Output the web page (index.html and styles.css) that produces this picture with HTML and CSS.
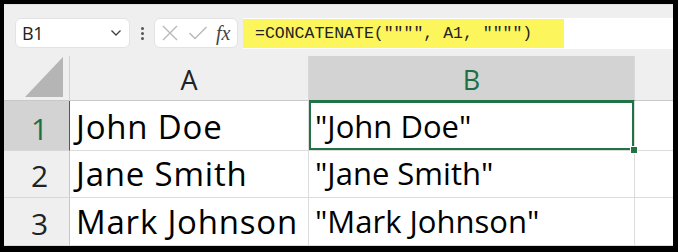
FILE: index.html
```html
<!DOCTYPE html>
<html>
<head>
<meta charset="utf-8">
<link rel="stylesheet" href="styles.css">
</head>
<body>
<div class="frame">
  <div class="toolbar">
    <div class="namebox">
      <span class="ref">B1</span>
      <svg class="chev" width="12" height="8" viewBox="0 0 12 8"><path d="M1.5 1.5 L6 6 L10.5 1.5" fill="none" stroke="#444" stroke-width="1.4"/></svg>
    </div>
    <div class="dots"><i></i><i></i><i></i></div>
    <div class="fxbox">
      <svg width="18" height="18" viewBox="0 0 18 18"><path d="M2 2 L16 16 M16 2 L2 16" stroke="#b8b8b8" stroke-width="1.4" fill="none"/></svg>
      <svg width="20" height="18" viewBox="0 0 20 18"><path d="M1.5 9 L7 14.5 L18.5 3" stroke="#b8b8b8" stroke-width="1.4" fill="none"/></svg>
      <span class="fx">fx</span>
    </div>
    <div class="formula">
      <span class="hl">=CONCATENATE("""", A1, """")</span>
    </div>
  </div>
  <div class="sheet">
    <div class="corner">
      <svg width="40" height="42" viewBox="0 0 40 42"><polygon points="38,1 38,41 0,41" fill="#b5b5b5"/></svg>
    </div>
    <div class="colh">A</div>
    <div class="colh sel">B</div>
    <div class="colh last"></div>

    <div class="rowh sel">1</div>
    <div class="cell">John Doe</div>
    <div class="cell colb active">"John Doe"<span class="handle"></span></div>
    <div class="cell last"></div>

    <div class="rowh">2</div>
    <div class="cell">Jane Smith</div>
    <div class="cell colb">"Jane Smith"</div>
    <div class="cell last"></div>

    <div class="rowh">3</div>
    <div class="cell">Mark Johnson</div>
    <div class="cell colb">"Mark Johnson"</div>
    <div class="cell last"></div>
  </div>
</div>
</body>
</html>
```

FILE: styles.css
```css
html, body {
  margin: 0;
  padding: 0;
  background: #000;
}
body {
  width: 678px;
  height: 252px;
  overflow: hidden;
}
.frame {
  margin: 4px 0 0 4px;
  width: 669px;
  height: 242px;
  background: #f0f0f0;
  display: flex;
  flex-direction: column;
  overflow: hidden;
}
.toolbar {
  height: 52px;
  box-sizing: border-box;
  padding: 13px 0 0 11px;
  display: flex;
  align-items: flex-start;
  background: #efefef;
  border-top: 1px solid #e2e2e2;
}
.namebox {
  width: 115px;
  height: 30px;
  box-sizing: border-box;
  background: #fff;
  border: 1px solid #e3e3e3;
  border-radius: 6px;
  display: flex;
  align-items: center;
  justify-content: space-between;
  padding: 0 7px 0 6px;
}
.ref {
  font-family: "Open Sans", sans-serif;
  font-size: 18px;
  color: #222;
  letter-spacing: -0.3px;
}
.dots {
  width: 24px;
  height: 30px;
  display: flex;
  flex-direction: column;
  align-items: center;
  justify-content: center;
  gap: 2px;
}
.dots i {
  display: block;
  width: 3px;
  height: 3px;
  background: #555;
  border-radius: 50%;
}
.fxbox {
  width: 84px;
  height: 30px;
  box-sizing: border-box;
  background: #fff;
  border: 1px solid #e3e3e3;
  border-radius: 6px;
  display: flex;
  align-items: center;
  padding-left: 6px;
  gap: 9px;
}
.fx {
  font-family: "Liberation Serif", serif;
  font-style: italic;
  font-size: 20px;
  color: #444;
  margin-left: -1px;
}
.formula {
  margin-left: 5px;
  flex: 1;
  height: 31px;
  background: #fff;
  display: flex;
  align-items: center;
}
.hl {
  background: #fdf55c;
  height: 29px;
  width: 321px;
  box-sizing: border-box;
  padding-left: 12px;
  display: flex;
  align-items: center;
  font-family: "Liberation Mono", monospace;
  font-size: 16.5px;
  color: #222;
}
.sheet {
  flex: 1;
  display: grid;
  grid-template-columns: 66px 239px 326px 38px;
  grid-template-rows: 45px 50px 47px 48px;
  background: #fff;
}
.corner {
  background: #efefef;
  border-right: 1px solid #d4d4d4;
  border-bottom: 1px solid #c8c8c8;
  display: flex;
  align-items: flex-end;
  justify-content: flex-end;
  padding: 0 4px 2px 0;
  box-sizing: border-box;
}
.colh {
  background: #efefef;
  border-right: 1px solid #d8d8d8;
  border-bottom: 1px solid #c8c8c8;
  box-sizing: border-box;
  display: flex;
  align-items: center;
  justify-content: center;
  font-family: "Open Sans", sans-serif;
  font-size: 27px;
  color: #222;
  padding-top: 2px;
}
.colh.sel {
  background: #d3d3d3;
  color: #1e6e42;
  border-bottom: 1px solid #217346;
}
.colh.last {
  border-right: none;
}
.rowh {
  background: #efefef;
  border-right: 1px solid #c8c8c8;
  border-bottom: 1px solid #d8d8d8;
  box-sizing: border-box;
  display: flex;
  align-items: flex-end;
  justify-content: center;
  padding: 0 0 1px 6px;
  font-family: "Open Sans", sans-serif;
  font-size: 30px;
  color: #222;
}
.rowh.sel {
  background: #d3d3d3;
  color: #1e6e42;
  border-right: 1px solid #217346;
}
.cell {
  border-right: 1px solid #dcdcdc;
  border-bottom: 1px solid #dcdcdc;
  box-sizing: border-box;
  display: flex;
  align-items: flex-end;
  padding: 0 0 1px 6px;
  font-family: "Open Sans", sans-serif;
  font-size: 33px;
  letter-spacing: 0.8px;
  color: #000;
  white-space: nowrap;
  position: relative;
}
.cell.colb {
  font-size: 31px;
  letter-spacing: 0;
  padding-bottom: 3px;
}
.cell.last {
  border-right: none;
}
.cell.active {
  box-shadow: inset 0 0 0 2px #217346;
}
.handle {
  position: absolute;
  right: -4px;
  bottom: -4px;
  width: 6px;
  height: 6px;
  background: #217346;
  border: 1px solid #fff;
  z-index: 2;
}
```
